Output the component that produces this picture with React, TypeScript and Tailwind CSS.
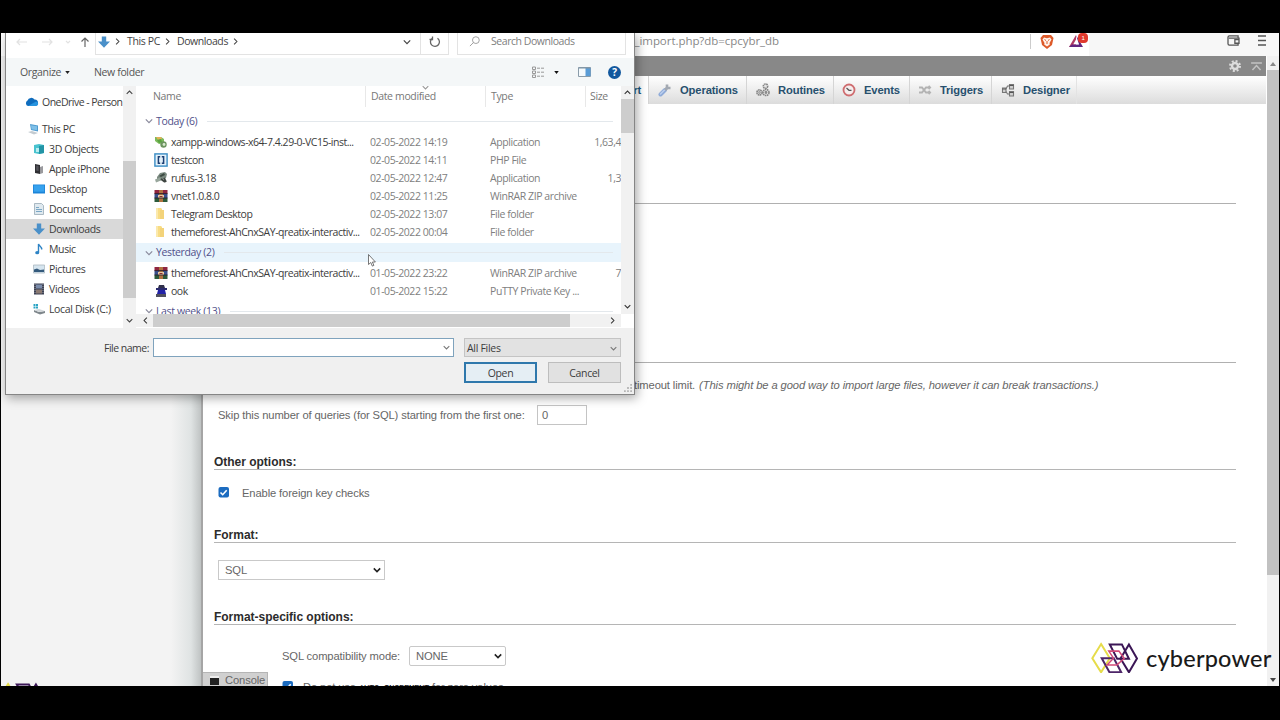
import { ReactNode } from "react"

type FileRow = {
    icon: ReactNode
    name: string
    date: string
    type: string
    size?: string
}

type Place = {
    icon: ReactNode
    label: string
    active?: boolean
}

const Chevron = ({ className, d = "M1 3 L5 7 L9 3" }: { className: string, d?: string }) => (
    <svg viewBox="0 0 10 10" className={className} fill="none" stroke="currentColor" strokeWidth="1.5">
        <path d={d} />
    </svg>
)

const DownArrow = () => (
    <svg viewBox="0 0 12 12" className="h-3 w-3">
        <path d="M3.8 0.5h4.4v5H12L6 11.8 0 5.5h3.8z" fill="#4a90c9" />
    </svg>
)

const FolderIcon = () => (
    <svg viewBox="0 0 14 14" className="size-3.5">
        <path d="M2 1h5l1 1v10H2z" fill="#f8dc84" />
        <path d="M6 3h4v9H6z" fill="#f3d37a" />
        <path d="M2 1h2v11H2z" fill="#fbe9ad" />
    </svg>
)

const RarIcon = () => (
    <svg viewBox="0 0 14 14" className="size-3.5">
        <path d="M0.5 1h13v4h-13z" fill="#8f2640" />
        <path d="M0.5 5h13v4h-13z" fill="#39508a" />
        <path d="M0.5 9h13v4h-13z" fill="#2b5a3a" />
        <path d="M5 1h4v12H5z" fill="#b0723f" />
        <path d="M4 6h6v3H4z" fill="#e5c7a2" />
        <path d="M0.5 4.6h13M0.5 9h13" stroke="#29202c" strokeWidth="0.9" />
        <path d="M5.5 7.5h3" stroke="#8b2d2d" />
    </svg>
)

const XamppIcon = () => (
    <svg viewBox="0 0 14 14" className="size-3.5">
        <path d="M1 2h6l3 2v4L5 9 1 6z" fill="#7cba5c" />
        <path d="M2 2h5l1 2-4 1z" fill="#e3b257" />
        <path d="M3 5l4-1 1 3-3 1z" fill="#5aa340" />
        <circle cx="9.5" cy="9.5" r="3.2" fill="#6c9460" />
        <circle cx="10" cy="9.5" r="1.4" fill="#d9ead0" />
    </svg>
)

const BracketsIcon = () => (
    <svg viewBox="0 0 14 14" className="size-3.5">
        <rect x="0.9" y="0.9" width="12.2" height="12.2" fill="#e4f1fa" stroke="#3a8cc4" strokeWidth="1.4" />
        <path d="M6.2 3.8H4.4v6.4h1.8M7.8 3.8h1.8v6.4H7.8" fill="none" stroke="#1d3f73" strokeWidth="1.5" />
    </svg>
)

const RufusIcon = () => (
    <svg viewBox="0 0 14 14" className="size-3.5">
        <path d="M3 6l3-4 5-1 2 2-1 4-4 2-5 1z" fill="#7b8a80" />
        <path d="M5 5l5-3 1 2-4 2z" fill="#3d4b43" />
        <path d="M1 8.5l5-2 1 3-5 2z" fill="#98a69c" />
        <path d="M7 8l4 3M10 7l2 4" stroke="#3f4642" strokeWidth="1.8" />
    </svg>
)

const PuttyIcon = () => (
    <svg viewBox="0 0 14 14" className="size-3.5">
        <path d="M2 4h11v2H2z" fill="#2a2a6e" />
        <path d="M5 1h5l1 3H4z" fill="#30304a" />
        <path d="M4 6h7l1 4H3z" fill="#2323a8" />
        <path d="M2 10h10v3H2z" fill="#50505e" />
    </svg>
)

const places: Place[] = [
    {
        label: "3D Objects",
        icon: (
            <svg viewBox="0 0 12 12" className="size-3">
                <path d="M1 2l5-1 5 1v8l-5 1-5-1z" fill="#49c3cf" />
                <path d="M6 3l5-1v8l-5 1z" fill="#2394a6" />
                <path d="M3 5h3v4H3z" fill="#b9edf0" />
            </svg>
        ),
    },
    {
        label: "Apple iPhone",
        icon: (
            <svg viewBox="0 0 12 12" className="size-3">
                <path d="M2 1l5 1v9l-5-1z" fill="#2f2f33" />
                <path d="M7 4l3-1v7l-3 1z" fill="#9a9a9e" />
                <path d="M3.2 2.5l2.4.5v5l-2.4-.4z" fill="#55555c" />
            </svg>
        ),
    },
    {
        label: "Desktop",
        icon: (
            <svg viewBox="0 0 12 12" className="size-3">
                <path d="M0 1.5h12v9H0z" fill="#1c84d8" />
                <path d="M0.8 2.3h10.4v6.4H0.8z" fill="#37a2ee" />
            </svg>
        ),
    },
    {
        label: "Documents",
        icon: (
            <svg viewBox="0 0 12 12" className="size-3">
                <path d="M1.5 0.5h7l2 2v9h-9z" fill="#dfe9ef" stroke="#98aab5" strokeWidth="0.8" />
                <path d="M3 4.5h3M3 6.5h6M3 8.5h6" stroke="#6f9fc0" strokeWidth="0.9" />
            </svg>
        ),
    },
    { label: "Downloads", icon: <DownArrow />, active: true },
    {
        label: "Music",
        icon: (
            <svg viewBox="0 0 12 12" className="size-3">
                <path d="M5.5 9.5V1c.5 2 3.5 2.5 3.2 5.5" fill="none" stroke="#2d83c5" strokeWidth="1.4" />
                <ellipse cx="4.2" cy="9.7" rx="2" ry="1.6" fill="#2d83c5" />
            </svg>
        ),
    },
    {
        label: "Pictures",
        icon: (
            <svg viewBox="0 0 12 12" className="size-3">
                <path d="M0.4 2h11.2v8H0.4z" fill="#d6e5ef" stroke="#a9b6bf" strokeWidth="0.8" />
                <path d="M1 6.5l3-1 3 1.5 4-.5v2.5H1z" fill="#345a7c" />
            </svg>
        ),
    },
    {
        label: "Videos",
        icon: (
            <svg viewBox="0 0 12 12" className="size-3">
                <path d="M1 0.5h10v11H1z" fill="#3d4152" />
                <path d="M3 1.5h6v4H3z" fill="#7b8cab" />
                <path d="M3 6.5h6v4H3z" fill="#8b7a72" />
                <path d="M2 1v10M10 1v10" stroke="#b7bac6" strokeWidth="0.7" strokeDasharray="1 1" />
            </svg>
        ),
    },
    {
        label: "Local Disk (C:)",
        icon: (
            <svg viewBox="0 0 12 12" className="size-3">
                <path d="M0.5 1h2v2h-2zM3 1h2v2H3zM0.5 3.5h2v2h-2zM3 3.5h2v2H3z" fill="#2aa4c4" />
                <path d="M1 7l5 2 6-1v2l-5 1.5L1 9z" fill="#7f878c" />
                <path d="M1 7l5-1 6 2-6 1z" fill="#d2d7da" />
            </svg>
        ),
    },
]

const today: FileRow[] = [
    { icon: <XamppIcon />, name: "xampp-windows-x64-7.4.29-0-VC15-inst...", date: "02-05-2022 14:19", type: "Application", size: "1,63,4" },
    { icon: <BracketsIcon />, name: "testcon", date: "02-05-2022 14:11", type: "PHP File" },
    { icon: <RufusIcon />, name: "rufus-3.18", date: "02-05-2022 12:47", type: "Application", size: "1,3" },
    { icon: <RarIcon />, name: "vnet1.0.8.0", date: "02-05-2022 11:25", type: "WinRAR ZIP archive" },
    { icon: <FolderIcon />, name: "Telegram Desktop", date: "02-05-2022 13:07", type: "File folder" },
    { icon: <FolderIcon />, name: "themeforest-AhCnxSAY-qreatix-interactiv...", date: "02-05-2022 00:04", type: "File folder" },
]

const yesterday: FileRow[] = [
    { icon: <RarIcon />, name: "themeforest-AhCnxSAY-qreatix-interactiv...", date: "01-05-2022 23:22", type: "WinRAR ZIP archive", size: "7" },
    { icon: <PuttyIcon />, name: "ook", date: "01-05-2022 15:22", type: "PuTTY Private Key ..." },
]

const Files = ({ rows }: { rows: FileRow[] }) => (
    <>
        {rows.map((row, i) => (
            <div key={i} className="flex h-[18px] shrink-0 items-center pl-[18px] tracking-[-0.43px] text-[#808080]">
                <span className="w-[17px] shrink-0">{row.icon}</span>
                <span className="w-[199px] shrink-0 tracking-[-0.48px] text-[#3c3c3c]">{row.name}</span>
                <span className="w-[120px] shrink-0">{row.date}</span>
                <span className="w-[95px] shrink-0">{row.type}</span>
                <span className="flex-1 text-right">{row.size}</span>
            </div>
        ))}
    </>
)

const Group = ({ label, className }: { label: string, className: string }) => (
    <div className={`flex shrink-0 items-center pl-[9px] ${className}`}>
        <Chevron className="size-2 text-[#8a8a9c]" />
        <span className="ml-[3px] text-[#50508a]">{label}</span>
        <span className="mr-2 ml-2.5 h-px flex-1 bg-[#e3e8ec]" />
    </div>
)

function AddressBar() {
    return (
        <div className="flex h-[22px] pl-2">
            <div className="flex w-[81px] items-center pb-1 text-[#e2e2e2]">
                <svg viewBox="0 0 81 14" className="h-3.5 w-[81px]" fill="none" stroke="currentColor" strokeWidth="1.2">
                    <path d="M13 7H3M6 4L3 7l3 3M28 7h10M35 4l3 3-3 3M52 6l2 2 2-2" />
                    <path d="M71 12V3M67.5 6.5L71 3l3.5 3.5" stroke="#666" />
                </svg>
            </div>
            <div className="flex w-[354px] border-r border-b border-l border-[#e3e3e3]">
                <div className="flex flex-1 items-center pb-1 pl-[2px] text-[#444]">
                    <DownArrow />
                    <Chevron className="mr-[6px] ml-[4px] size-[7px]" d="M3 1L7 5 3 9" />
                    <span className="w-[37px]">This PC</span>
                    <Chevron className="mr-[6px] size-[7px]" d="M3 1L7 5 3 9" />
                    <span className="tracking-[-0.42px]">Downloads</span>
                    <Chevron className="ml-1 size-[7px]" d="M3 1L7 5 3 9" />
                    <Chevron className="mr-[9px] ml-auto size-[8px]" />
                </div>
                <div className="flex w-7 items-center justify-center border-l border-[#e3e3e3] pb-1">
                    <svg viewBox="0 0 12 12" className="size-3" fill="none" stroke="#666" strokeWidth="1.3">
                        <path d="M3 2.5a4.5 4.5 0 1 0 5.5-.3" />
                        <path d="M3.5 0.5V3.5H0.5" />
                    </svg>
                </div>
            </div>
            <div className="ml-[8px] flex w-[169px] items-center border-r border-b border-l border-[#e3e3e3] pb-1 pl-[11px] text-[#808080]">
                <svg viewBox="0 0 12 12" className="size-[11px]" fill="none" stroke="#999">
                    <circle cx="7.5" cy="4.5" r="3.7" />
                    <path d="M5 7L1 11" />
                </svg>
                <span className="ml-[11px] tracking-[-0.45px]">Search Downloads</span>
            </div>
        </div>
    )
}

function Toolbar() {
    return (
        <div className="mt-[3px] flex h-7 items-center bg-[#f4f7f8] pr-[13px] pl-[14px] text-[#555]">
            <span className="w-[41px]">Organize</span>
            <svg viewBox="0 0 6 4" className="ml-[4px] h-[3px] w-[5px]"><path d="M0 0h6L3 4z" fill="#222" /></svg>
            <span className="ml-6">New folder</span>
            <svg viewBox="0 0 12 12" className="ml-auto size-3" fill="none" stroke="#999">
                <path d="M0.5 1h3v2.5h-3zM0.5 5h3v2.5h-3zM0.5 9h3v2.5h-3z" />
                <path d="M5 2.2h7M5 6.2h7M5 10.2h7" strokeDasharray="3 1" />
            </svg>
            <svg viewBox="0 0 6 4" className="ml-[10px] h-[3px] w-[5px]"><path d="M0 0h6L3 4z" fill="#111" /></svg>
            <svg viewBox="0 0 13 10" className="ml-[19px] h-[10px] w-[13px]">
                <path d="M.5.5h12v9H.5z" fill="#f5fafd" stroke="#8a9caa" />
                <path d="M7.5 1h5v8h-5z" fill="#5a9cd6" />
                <path d="M.5 1h12" stroke="#7c93a5" />
            </svg>
            <span className="ml-[17px] flex size-[13px] items-center justify-center rounded-full bg-[#12589e] text-[10px] leading-none font-bold text-white">?</span>
        </div>
    )
}

function NavPane() {
    return (
        <div className="flex w-[130px] shrink-0">
            <div className="w-[117px] overflow-hidden pt-[6px] whitespace-nowrap text-[#3c3c3c]">
                <div className="flex h-5 items-center pl-[19px]">
                    <svg viewBox="0 0 14 10" className="h-[10px] w-3.5 shrink-0">
                        <path d="M3 9a3 3 0 0 1-.5-5.5A4 4 0 0 1 9.5 2.5 3.4 3.4 0 0 1 13 6q0 3-3 3z" fill="#0f6cbd" />
                        <path d="M3 9l8-4.5q2.5.5 2.2 2.5-.4 2-3 2z" fill="#2794df" />
                    </svg>
                    <span className="ml-[3px] tracking-[-0.52px]">OneDrive - Person</span>
                </div>
                <div className="mt-[7px] flex h-5 items-center pl-[22px]">
                    <svg viewBox="0 0 12 12" className="size-3">
                        <path d="M2 1l8 1.5v6L3 7z" fill="#4e9bd0" />
                        <path d="M3 2.2l6 1v4l-5.4-1z" fill="#7fc0e8" />
                        <path d="M0 9l4-1 6 2-4 1.5z" fill="#c3cbd1" />
                    </svg>
                    <span className="ml-[2px]">This PC</span>
                </div>
                {places.map(place => (
                    <div
                        key={place.label}
                        className={place.active ? "flex h-5 items-center bg-[#d9d9d9] pl-[27px]" : "flex h-5 items-center pl-[27px]"}
                    >
                        {place.icon}
                        <span className="ml-1">{place.label}</span>
                    </div>
                ))}
            </div>
            <div className="flex w-[13px] flex-col items-center bg-[#f1f1f1] text-[#444]">
                <Chevron className="mt-[3px] size-[7px]" d="M1 7L5 3 9 7" />
                <div className="mt-[65px] h-[137px] w-full bg-[#cdcdcd]" />
                <Chevron className="mt-auto mb-[4px] size-[7px]" />
            </div>
        </div>
    )
}

function FileList() {
    return (
        <div className="flex min-w-0 flex-1 flex-col">
            <div className="flex h-[228px]">
                <div className="flex w-[485px] flex-col overflow-hidden whitespace-nowrap">
                    <div className="flex h-[21px] shrink-0 items-center pl-[17px] text-[#777]">
                        <span className="w-[212px]">Name</span>
                        <span className="relative flex h-full w-[120px] items-center border-l border-[#e8e8e8] pl-[5px]">
                            Date modified
                            <Chevron className="absolute -top-[2px] left-[56px] size-[7px] text-[#999]" />
                        </span>
                        <span className="flex h-full w-[100px] items-center border-l border-[#e8e8e8] pl-[5px]">Type</span>
                        <span className="flex h-full flex-1 items-center border-l border-[#e8e8e8] pl-[4px]">Size</span>
                    </div>
                    <Group label="Today (6)" className="mt-1 mb-[2px] h-[20px]" />
                    <Files rows={today} />
                    <Group label="Yesterday (2)" className="mt-[2px] mb-[2px] h-[19px] bg-[#e8f4fc]" />
                    <Files rows={yesterday} />
                    <Group label="Last week (13)" className="mt-[1px] h-[20px]" />
                </div>
                <div className="flex w-[13px] flex-col items-center bg-[#f1f1f1] text-[#333]">
                    <Chevron className="mt-[3px] size-[7px]" d="M1 7L5 3 9 7" />
                    <div className="mt-[3px] h-[34px] w-full bg-[#cdcdcd]" />
                    <Chevron className="mt-auto mb-[4px] size-[7px]" />
                </div>
            </div>
            <div className="flex h-[13px] w-[485px] items-center bg-[#f1f1f1] pr-[5px] pl-[6px] text-[#333]">
                <Chevron className="size-[7px]" d="M7 1L3 5 7 9" />
                <div className="ml-[4px] h-full w-[417px] bg-[#cdcdcd]" />
                <Chevron className="ml-auto size-[7px]" d="M3 1L7 5 3 9" />
            </div>
        </div>
    )
}

function OpenDialog() {
    return (
        <div className="absolute top-0 left-[4px] flex h-[362px] w-[630px] flex-col border-r border-b border-l border-[#858585] bg-white font-['Open_Sans',sans-serif] text-[10.5px] leading-none tracking-[-0.36px] whitespace-nowrap shadow-[2px_3px_10px_rgba(0,0,0,0.35)]">
            <AddressBar />
            <Toolbar />
            <div className="flex h-[242px]">
                <NavPane />
                <FileList />
            </div>
            <div className="flex-1 bg-[#f0f0f0] pt-[10px] text-[#3c3c3c]">
                <div className="flex h-[19px] items-center">
                    <span className="w-[143px] pt-px text-right tracking-[-0.5px]">File name:</span>
                    <div className="ml-[4px] flex h-[19px] w-[301px] items-center justify-end border border-[#7fa3bd] bg-white pr-[3px]">
                        <Chevron className="size-[7px] text-[#777]" />
                    </div>
                    <div className="ml-[10px] flex h-[19px] w-[157px] items-center justify-between border border-[#c4c4c4] bg-[#e2e2e2] pt-px pr-[3px] pl-[2px] tracking-[-0.3px]">
                        All Files
                        <Chevron className="size-[7px] text-[#777]" />
                    </div>
                </div>
                <div className="mt-[5px] flex gap-[11px] pl-[458px]">
                    <button className="h-[21px] w-[73px] border-2 border-[#2f78ac] bg-[#e5eef4] pt-px">Open</button>
                    <button className="h-[21px] w-[73px] border border-[#bdbdbd] bg-[#e1e1e1] pt-px">Cancel</button>
                </div>
            </div>
            <svg viewBox="0 0 9 9" className="absolute right-0.5 bottom-0.5 size-[8px]" fill="#b5b5b5">
                <path d="M7 0h2v2H7zM7 3.5h2v2H7zM7 7h2v2H7zM3.5 3.5h2v2h-2zM3.5 7h2v2h-2zM0 7h2v2H0z" />
            </svg>
        </div>
    )
}

const tabs = [
    {
        label: "Operations",
        className: "w-[98px] pl-[9px] gap-[8px]",
        icon: (
            <svg viewBox="0 0 14 14" className="size-3.5">
                <path d="M2.5 11.5L7 7" stroke="#8fabd8" strokeWidth="4" strokeLinecap="round" />
                <path d="M2.5 11L6.5 7" stroke="#bccfee" strokeWidth="1.5" strokeLinecap="round" />
                <path d="M7 7l3-3" stroke="#a3a9b2" strokeWidth="3" />
                <path d="M9 1.5v3.5h3.5" fill="none" stroke="#a3a9b2" strokeWidth="2.6" />
            </svg>
        ),
    },
    {
        label: "Routines",
        className: "w-[87px] pl-[9px] gap-[8px]",
        icon: (
            <svg viewBox="0 0 14 14" className="size-3.5" fill="#e4e4e4" stroke="#858585" strokeWidth="1.6">
                <circle cx="9.5" cy="3.2" r="2.2" strokeDasharray="1.5 .5" />
                <circle cx="3.5" cy="9.5" r="2.6" strokeDasharray="1.6 .5" />
                <circle cx="10" cy="9.5" r="3" strokeDasharray="1.6 .5" />
                <circle cx="10" cy="9.5" r="0.6" />
                <circle cx="3.5" cy="9.5" r="0.4" />
            </svg>
        ),
    },
    {
        label: "Events",
        className: "w-[76px] pl-[8px] gap-[8px]",
        icon: (
            <svg viewBox="0 0 14 14" className="size-3.5">
                <circle cx="7" cy="7" r="5.5" fill="#f6eeee" stroke="#cf6d70" strokeWidth="1.8" />
                <path d="M4.5 5L7 7.3h2.5" fill="none" stroke="#555" strokeWidth="1.2" />
            </svg>
        ),
    },
    {
        label: "Triggers",
        className: "w-[82px] pl-[8px] gap-[8px]",
        icon: (
            <svg viewBox="0 0 14 14" className="size-3.5" fill="none" stroke="#b3b3b3" strokeWidth="2">
                <path d="M1 4.5h3l4 5h4M1 9.5h3l4-5h4M10.5 3l1.5 1.5L10.5 6M10.5 8l1.5 1.5-1.5 1.5" />
            </svg>
        ),
    },
    {
        label: "Designer",
        className: "w-[85px] pl-[9px] gap-[8px]",
        icon: (
            <svg viewBox="0 0 14 14" className="size-3.5" fill="#d0d0d0" stroke="#777" strokeWidth="1.1">
                <path d="M1.5 5h3.5v4.5H1.5zM8.5 1.5h4v4.5h-4zM8.5 8.5h4V13h-4z" />
                <path d="M5 6L6.5 3H8.5M5 8.5l1.5 2.5h2" fill="none" />
                <path d="M8.5 2.5h4M8.5 9.5h4M1.5 6H5" stroke="#555" />
            </svg>
        ),
    },
]

function BrowserBar() {
    return (
        <div className="flex h-[23px] bg-[#f7f7f7]">
            <div className="flex w-[1088px] items-center bg-white pb-[7px]">
                <span className="w-[778px] text-right font-['Open_Sans',sans-serif] text-[11.5px] leading-none tracking-[-0.05px] text-[#888]">b_import.php?db=cpcybr_db</span>
                <span className="ml-[251px] h-[15px] w-px bg-[#ccc]" />
                <svg viewBox="0 0 14 15" className="ml-[9px] h-[15px] w-3.5">
                    <path d="M3 1h8l2.5 3-1.5 7-5 4-5-4L.5 4z" fill="#dd5a2a" />
                    <path d="M4 3.5l3 .8 3-.8 1.5 2-2 3.5.3 1.5L7 12.5l-2.8-2 .3-1.5-2-3.5z" fill="#fff3ec" />
                    <path d="M4.5 5.5l1.5 1M9.5 5.5L8 6.5M7 7v3" stroke="#dd5a2a" />
                </svg>
                <div className="relative ml-[14px]">
                    <svg viewBox="0 0 16 14" className="h-[14px] w-4">
                        <path d="M8 1L1 13h7z" fill="#b03a62" />
                        <path d="M8 1l7 12H1l3-2.5h7z" fill="#62257e" />
                        <path d="M8 5.5l2.7 4.7H5.3z" fill="#fff" />
                    </svg>
                    <span className="absolute -top-[1px] left-[10px] flex size-[10px] items-center justify-center rounded-[4px] bg-[#e0392d] text-[6px] leading-none text-white">1</span>
                </div>
            </div>
            <svg viewBox="0 0 14 12" className="mt-[2px] ml-[138px] h-[11px] w-[13px]" fill="none" stroke="#555" strokeWidth="1.4">
                <path d="M12 3.5V1H2.5A1.5 1.5 0 0 0 1 2.5v7A1.5 1.5 0 0 0 2.5 11H12V9M2 3.5h11v5.5H8.5V5h4.5" />
            </svg>
            <svg viewBox="0 0 8 11" className="mt-[2px] ml-[18px] h-[11px] w-2" stroke="#555" strokeWidth="1.3">
                <path d="M0 1h8M0 5.5h8M0 10h8" />
            </svg>
        </div>
    )
}

function TopMenu() {
    return (
        <div className="flex h-7 bg-gradient-to-b from-white to-[#dcdcdc] font-bold">
            <div className="flex w-[445px] items-center justify-end bg-white pt-px pr-[7px] text-[#235a81]">Import</div>
            {tabs.map(tab => (
                <div key={tab.label} className={`flex shrink-0 items-center border-l border-[#d5d5d5] text-[#27506e] ${tab.className}`}>
                    {tab.icon}
                    <span className="pt-[2px]">{tab.label}</span>
                </div>
            ))}
            <div className="border-l border-[#e3e3e3]" />
        </div>
    )
}

const Checkbox = () => (
    <svg viewBox="0 0 11 11" className="size-[11px] shrink-0">
        <rect x="0.5" width="10.5" height="10.5" rx="2" fill="#1c6cc0" />
        <path d="M2.5 5.5l2.2 2.2 4-4.4" fill="none" stroke="#fff" strokeWidth="1.6" />
    </svg>
)

const Heading = ({ children }: { children: ReactNode }) => (
    <h2 className="h-[15px] w-[1022px] border-b border-[#b5b5b5] text-[12px] leading-[14px] font-bold tracking-[-0.02px] text-[#2c2c2c]">{children}</h2>
)

function ImportPage() {
    return (
        <main className="flex-1 overflow-hidden pl-[11px] whitespace-nowrap">
            <div className="h-[100px] w-[1022px] border-b border-[#b0b0b0]" />
            <div className="h-[159px] w-[1022px] border-b border-[#b0b0b0]" />
            <div className="mt-[14px] flex h-[17px] items-center pl-[420px]">
                <span>timeout limit.</span>
                <i className="ml-[4px] tracking-[-0.11px]">(This might be a good way to import large files, however it can break transactions.)</i>
            </div>
            <div className="mt-[11px] flex h-[20px] items-center pl-[4px]">
                <span className="w-[319px] pt-[2px]">Skip this number of queries (for SQL) starting from the first one:</span>
                <span className="flex h-5 w-[50px] items-center border border-[#c4c4c4] pt-[2px] pl-1">0</span>
            </div>
            <div className="h-[30px]" />
            <Heading>Other options:</Heading>
            <div className="mt-[14px] flex h-4 items-center gap-[13px] pl-[4px]">
                <Checkbox />
                <span className="pt-[3px]">Enable foreign key checks</span>
            </div>
            <div className="h-[28px]" />
            <Heading>Format:</Heading>
            <div className="mt-[17px] ml-[4px] flex h-5 w-[167px] items-center justify-between border border-[#c9c9c9] pr-[3px] pl-[6px]">
                <span className="pt-[2px]">SQL</span>
                <Chevron className="size-2 stroke-2 text-[#222]" />
            </div>
            <div className="h-[30px]" />
            <Heading>Format-specific options:</Heading>
            <div className="mt-[21px] flex h-5 items-center pl-[68px]">
                <span className="w-[127px] pt-[2px]">SQL compatibility mode:</span>
                <div className="flex h-5 w-[97px] items-center justify-between rounded-xs border border-[#c9c9c9] pr-[3px] pl-[6px]">
                    <span className="pt-[2px]">NONE</span>
                    <Chevron className="size-2 stroke-2 text-[#222]" />
                </div>
            </div>
            <div className="mt-[15px] flex h-4 items-start gap-[10px] pl-[68px]">
                <Checkbox />
                <span className="leading-[13px] tracking-[-0.12px]">
                    Do not use <code className="font-['Liberation_Mono',monospace] text-[9px] tracking-[-0.4px] text-[#111]">AUTO_INCREMENT</code> for zero values
                </span>
            </div>
        </main>
    )
}

const LogoMark = ({ className }: { className: string }) => (
    <svg viewBox="0 0 140 92" className={className} fill="none" strokeWidth="6">
        <path d="M30 6L56 48 30 90 4 48z" stroke="#e6dc4a" />
        <path d="M56 7h36l21 43H78z" stroke="#3b1656" />
        <path d="M113 7l24 42-24 41-25-41z" stroke="#3b1656" />
        <path d="M32 48h36l22 42H55z" stroke="#4d2568" />
        <path d="M53 27h30l16 22-22 19H48l19-20z" stroke="#d14a78" strokeWidth="4.5" />
    </svg>
)

export default function App() {
    return (
        <div className="h-[720px] w-[1280px] overflow-hidden bg-black pt-[33px]">
            <div className="relative ml-px flex h-[653px] w-[1278px] flex-col overflow-hidden bg-white font-['Liberation_Sans',sans-serif] text-[11.2px] leading-none tracking-[-0.12px] text-[#666]">
                <BrowserBar />
                <div className="flex min-h-0 flex-1">
                    <aside className="w-[202px] shrink-0 border-r-2 border-[#a5a5a5] bg-[linear-gradient(to_right,#f3f3f3_170px,#dfe3e3_190px,#bfc3c3_200px)]" />
                    <div className="flex min-w-0 flex-1 flex-col">
                        <div className="flex h-5 shrink-0 items-center justify-end gap-[10px] bg-[#888] pr-[4px]">
                            <svg viewBox="0 0 12 12" className="size-3">
                                <circle cx="6" cy="6" r="3" fill="none" stroke="#dcdcdc" strokeWidth="2.4" />
                                <circle cx="6" cy="6" r="5" fill="none" stroke="#dcdcdc" strokeWidth="2" strokeDasharray="2 1.93" />
                            </svg>
                            <svg viewBox="0 0 12 10" className="h-[9px] w-[11px]" fill="none" stroke="#c2c2c2" strokeWidth="1.7">
                                <path d="M0 1h12M1.5 9L6 4l4.5 5" />
                            </svg>
                        </div>
                        <TopMenu />
                        <ImportPage />
                    </div>
                    <div className="flex w-[13px] shrink-0 flex-col items-center border-l border-white bg-[#f1f1f1]">
                        <svg viewBox="0 0 6 4" className="mt-[6px] h-1 w-1.5"><path d="M0 4h6L3 0z" fill="#888" /></svg>
                        <div className="mt-1 h-[505px] w-full bg-[#c1c1c1]" />
                        <svg viewBox="0 0 6 4" className="mt-auto mb-1 h-1 w-1.5"><path d="M0 0h6L3 4z" fill="#444" /></svg>
                    </div>
                </div>

                <div className="absolute bottom-0 left-[202px] flex h-[14px] w-[65px] items-center gap-[6px] border-t border-r border-[#b5b5b5] bg-[#d0d0d0] pt-[2px] pl-[7px]">
                    <svg viewBox="0 0 9 9" className="size-[9px]">
                        <path d="M0 0h9v9H0z" fill="#222" />
                        <path d="M0 0h9v2H0z" fill="#eee" />
                    </svg>
                    Console
                </div>

                <OpenDialog />

                <svg viewBox="0 0 8 13" className="absolute top-[221px] left-[367px] h-[13px] w-2">
                    <path d="M.5.5v10l2.3-2 1.5 3.6 1.6-.7-1.5-3.4h3z" fill="#fff" stroke="#555" strokeWidth="0.8" />
                </svg>

                {/* channel watermark */}
                <div className="absolute top-[609px] left-[1090px] flex items-center">
                    <LogoMark className="h-[31px] w-[47px]" />
                    <span className="ml-[8px] w-[126px] pt-[2px] font-['Lato',sans-serif] text-[23.5px] leading-none font-medium tracking-[0.2px] text-[#1a1a1a]">cyberpower</span>
                </div>
                <LogoMark className="absolute top-[649px] -left-[3px] h-[31px] w-[47px]" />
            </div>
        </div>
    )
}
